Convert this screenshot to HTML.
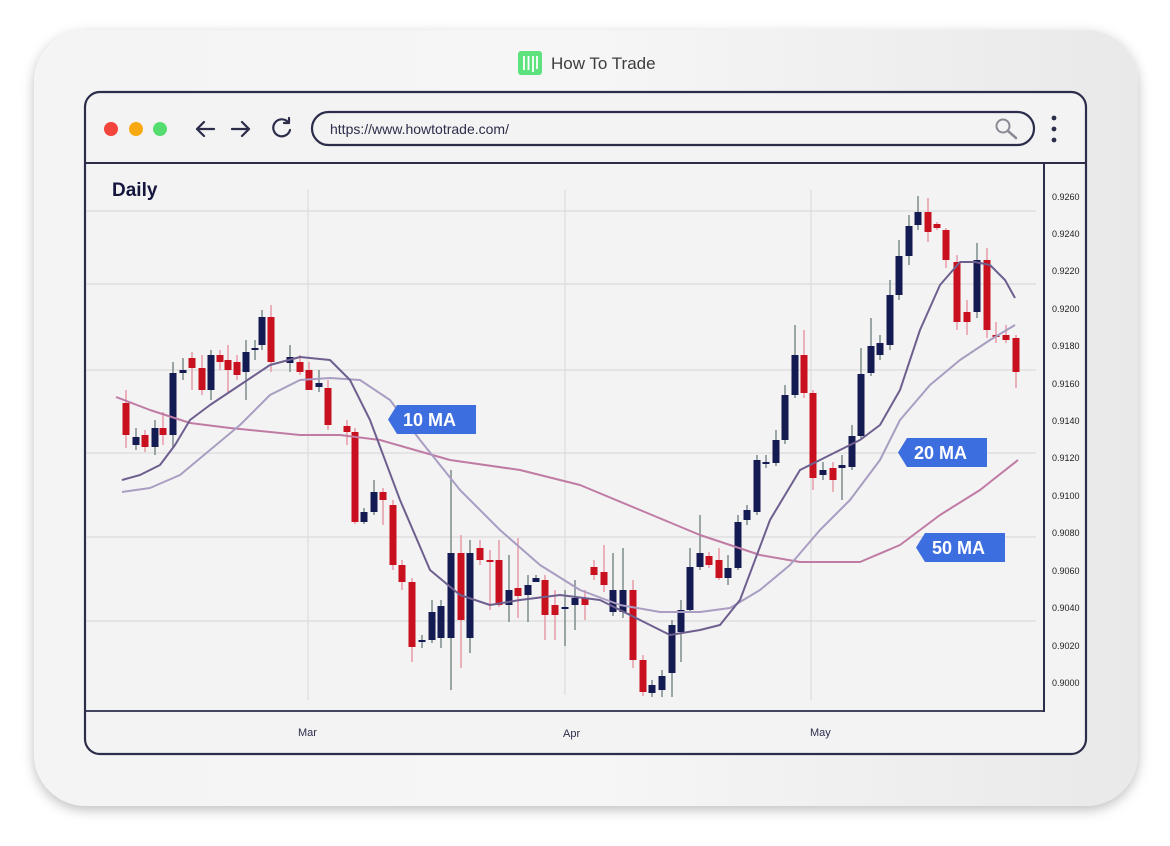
<!DOCTYPE html>
<html><head><meta charset="utf-8"><style>
html,body{margin:0;padding:0;background:#fff;width:1170px;height:846px;overflow:hidden;font-family:"Liberation Sans",sans-serif}
</style></head><body>
<svg width="1170" height="846" viewBox="0 0 1170 846" xmlns="http://www.w3.org/2000/svg" font-family="Liberation Sans, sans-serif">
<defs>
<filter id="sh" x="-5%" y="-5%" width="110%" height="112%"><feDropShadow dx="0" dy="4" stdDeviation="6" flood-color="#000" flood-opacity="0.25"/></filter>
<linearGradient id="fr" x1="0" x2="1"><stop offset="0" stop-color="#f4f4f4"/><stop offset="0.5" stop-color="#f6f6f6"/><stop offset="1" stop-color="#e9e9e9"/></linearGradient>
</defs>
<rect x="34" y="30" width="1104" height="776" rx="52" fill="url(#fr)" filter="url(#sh)"/>
<!-- logo -->
<rect x="518" y="51" width="24" height="24" rx="3" fill="#5ee27d"/>
<g stroke="#fff" stroke-width="1.8"><line x1="524" y1="56" x2="524" y2="70"/><line x1="528.5" y1="56" x2="528.5" y2="70"/><line x1="533" y1="56" x2="533" y2="72"/><line x1="537" y1="56" x2="537" y2="69"/></g>
<text x="551" y="69" font-size="17" fill="#3a3c3e">How To Trade</text>
<!-- browser window -->
<rect x="85" y="92" width="1001" height="662" rx="15" fill="#f3f3f3" stroke="#2b2d4a" stroke-width="2.2"/>
<line x1="85" y1="163" x2="1086" y2="163" stroke="#2b2d4a" stroke-width="2"/>
<circle cx="111" cy="129" r="7" fill="#f4443b"/><circle cx="136" cy="129" r="7" fill="#f8a90f"/><circle cx="160" cy="129" r="7" fill="#55dc71"/>
<g fill="none" stroke="#2b2d4a" stroke-width="2.2" stroke-linecap="round" stroke-linejoin="round">
<path d="M214 129H197M204 122L197 129L204 136"/>
<path d="M232 129H249M242 122L249 129L242 136"/>
<path d="M288 122A8.5 8.5 0 1 0 290 130M289 118V123H284"/>
<rect x="312" y="112" width="722" height="33" rx="16.5"/>
</g>
<text x="330" y="134" font-size="14" fill="#2b2d4a">https://www.howtotrade.com/</text>
<circle cx="1003" cy="126" r="6.5" fill="none" stroke="#8a8a95" stroke-width="2"/><line x1="1008" y1="131" x2="1016" y2="138" stroke="#8a8a95" stroke-width="2.5" stroke-linecap="round"/>
<g fill="#2b2d4a"><circle cx="1054" cy="118" r="2.4"/><circle cx="1054" cy="129" r="2.4"/><circle cx="1054" cy="140" r="2.4"/></g>
<!-- axes -->
<line x1="1044" y1="163" x2="1044" y2="712" stroke="#2b2d4a" stroke-width="2"/>
<line x1="85" y1="711" x2="1044" y2="711" stroke="#2b2d4a" stroke-width="1.8"/>
<g stroke="#dcdcdc" stroke-width="1.2">
<line x1="86" y1="211" x2="1036" y2="211"/><line x1="86" y1="284" x2="1036" y2="284"/><line x1="86" y1="370" x2="1036" y2="370"/><line x1="86" y1="453" x2="1036" y2="453"/><line x1="86" y1="537" x2="1036" y2="537"/><line x1="86" y1="621" x2="1036" y2="621"/>
<line x1="308" y1="190" x2="308" y2="700"/><line x1="565" y1="190" x2="565" y2="695"/><line x1="811" y1="190" x2="811" y2="700"/>
</g>
<g font-size="9" fill="#222">
<text x="1052" y="200">0.9260</text><text x="1052" y="237">0.9240</text><text x="1052" y="274">0.9220</text><text x="1052" y="312">0.9200</text><text x="1052" y="349">0.9180</text><text x="1052" y="387">0.9160</text><text x="1052" y="424">0.9140</text><text x="1052" y="461">0.9120</text><text x="1052" y="499">0.9100</text><text x="1052" y="536">0.9080</text><text x="1052" y="574">0.9060</text><text x="1052" y="611">0.9040</text><text x="1052" y="649">0.9020</text><text x="1052" y="686">0.9000</text>
</g>
<g font-size="11" fill="#2b2d4a"><text x="298" y="736">Mar</text><text x="563" y="737">Apr</text><text x="810" y="736">May</text></g>
<text x="112" y="196" font-size="19" font-weight="bold" fill="#14163d">Daily</text>
<g id="c"></g>
<g fill="none" stroke-width="2" stroke-linejoin="round">
<polyline stroke="#c07ba5" points="116,397 150,410 190,423 230,428 300,435 340,435 380,440 450,460 520,470 580,485 640,510 700,535 760,555 800,562 860,562 900,545 940,515 980,490 1018,460"/>
<polyline stroke="#a99dc2" points="122,492 150,488 180,475 210,450 240,425 270,395 300,380 330,378 360,380 390,400 420,440 460,490 500,530 540,565 580,590 620,605 660,612 700,612 730,608 760,590 790,565 820,530 850,500 880,460 900,420 930,385 960,360 990,340 1015,325"/>
<polyline stroke="#6e5f8e" points="122,480 140,475 160,465 175,445 190,420 210,405 240,385 270,365 300,357 330,360 350,380 370,420 400,500 430,570 460,595 490,605 520,600 560,595 600,600 640,620 670,635 700,630 720,625 740,600 770,520 800,470 830,455 860,440 880,425 900,390 920,330 940,285 960,262 975,262 990,265 1005,280 1015,298"/>
</g>
<g font-size="18" font-weight="bold" fill="#fff">
<path d="M397 405H476V434H397L388 419.5Z" fill="#3d6ee0"/><text x="403" y="426">10 MA</text>
<path d="M907 438H987V467H907L898 452.5Z" fill="#3d6ee0"/><text x="914" y="459">20 MA</text>
<path d="M925 533H1005V562H925L916 547.5Z" fill="#3d6ee0"/><text x="932" y="554">50 MA</text>
</g>
</svg>
<script>
var d=[[126,'r',403,435,390,448],[136,'b',437,445,428,450],[145,'r',435,447,430,452],[155,'b',428,447,420,455],[163,'r',428,435,412,445],[173,'b',373,435,362,448],[183,'b',370,373,358,380],[192,'r',358,368,352,390],[202,'r',368,390,355,395],[211,'b',355,390,350,400],[220,'r',355,362,350,370],[228,'r',360,370,345,392],[237,'r',362,375,355,380],[246,'b',352,372,340,400],[255,'b',348,350,340,360],[262,'b',317,345,310,350],[271,'r',317,362,305,372],[290,'b',357,363,345,372],[300,'r',362,372,355,375],[309,'r',370,390,362,390],[319,'b',383,387,370,392],[328,'r',388,425,380,430],[347,'r',426,432,420,445],[355,'r',432,522,428,524],[364,'b',512,522,508,524],[374,'b',492,512,480,515],[383,'r',492,500,488,525],[393,'r',505,565,500,570],[402,'r',565,582,560,590],[412,'r',582,647,578,662],[422,'b',640,642,635,648],[432,'b',612,640,600,643],[441,'b',606,638,600,648],[451,'b',553,638,470,690],[461,'r',553,620,535,668],[470,'b',553,638,540,653],[480,'r',548,560,540,565],[490,'r',560,562,550,610],[499,'r',560,605,540,607],[509,'b',590,605,555,622],[518,'r',588,596,538,618],[528,'b',585,595,575,622],[536,'b',578,582,575,582],[545,'r',580,615,575,640],[555,'r',605,615,590,640],[565,'b',607,609,590,646],[575,'b',598,605,580,630],[585,'r',598,605,590,620],[594,'r',567,575,560,580],[604,'r',572,585,545,592],[613,'b',590,612,553,616],[623,'b',590,612,548,618],[633,'r',590,660,580,668],[643,'r',660,692,655,696],[652,'b',685,693,680,697],[662,'b',676,690,670,697],[672,'b',625,673,620,697],[681,'b',610,632,600,662],[690,'b',567,610,548,612],[700,'b',553,567,515,570],[709,'r',556,565,552,568],[719,'r',560,578,548,580],[728,'b',568,578,555,585],[738,'b',522,568,515,570],[747,'b',510,520,505,525],[757,'b',460,512,455,515],[766,'b',462,464,455,468],[776,'b',440,463,430,466],[785,'b',395,440,385,444],[795,'b',355,395,325,398],[804,'r',355,393,330,398],[813,'r',393,478,390,490],[823,'b',470,475,462,480],[833,'r',468,480,462,492],[842,'b',465,468,455,500],[852,'b',436,467,425,470],[861,'b',374,436,348,438],[871,'b',346,373,318,376],[880,'b',343,355,335,360],[890,'b',295,345,280,350],[899,'b',256,295,240,300],[909,'b',226,256,215,265],[918,'b',212,225,196,230],[928,'r',212,232,198,242],[937,'r',224,228,222,230],[946,'r',230,260,228,268],[957,'r',262,322,255,330],[967,'r',312,322,300,335],[977,'b',260,312,243,318],[987,'r',260,330,248,338],[996,'r',335,337,322,343],[1006,'r',335,340,325,343],[1016,'r',338,372,335,388]];
var s='';d.forEach(function(c){var x=c[0],r=c[1]=='r';var h=Math.max(c[3]-c[2],2);
s+='<line x1="'+x+'" x2="'+x+'" y1="'+c[4]+'" y2="'+c[5]+'" stroke="'+(r?'#e99aa6':'#7d8c8c')+'" stroke-width="1.5"/>';
s+='<rect x="'+(x-3.5)+'" y="'+c[2]+'" width="7" height="'+h+'" fill="'+(r?'#c8101e':'#141a52')+'"/>';});
document.getElementById('c').innerHTML=s;
</script>
</body></html>
